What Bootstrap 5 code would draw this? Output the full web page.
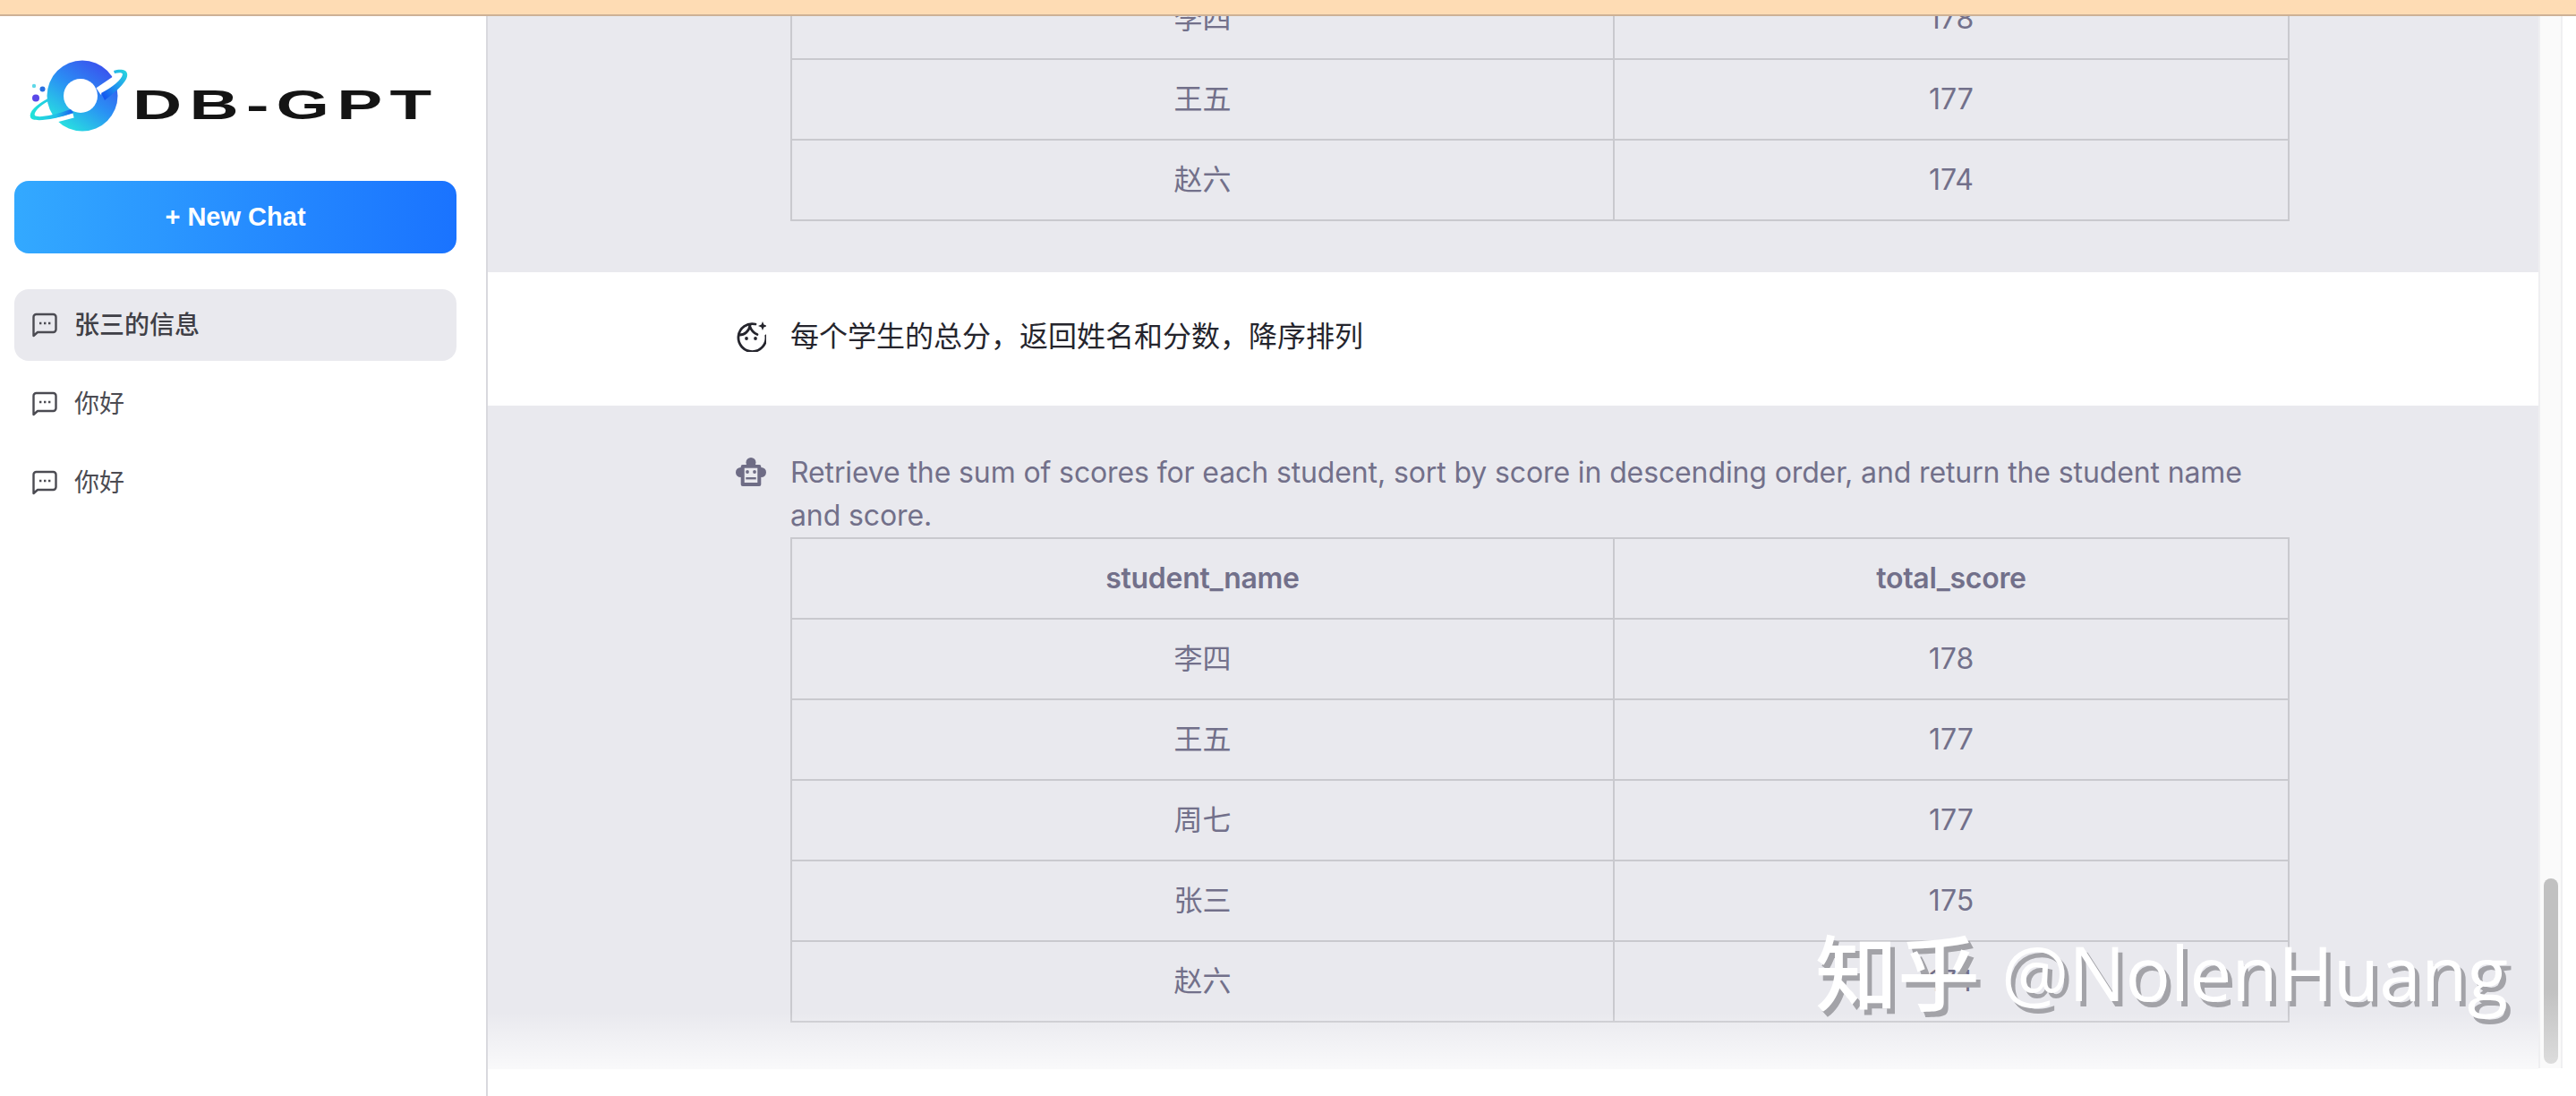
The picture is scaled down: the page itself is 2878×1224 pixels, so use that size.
<!DOCTYPE html>
<html lang="zh">
<head>
    <meta charset="UTF-8" />
    <title>DB-GPT</title>
    <link href="https://cdn.jsdelivr.net/npm/bootstrap@5.3.0/dist/css/bootstrap.min.css" rel="stylesheet" />
    <style>
        html, body { height: 100%; overflow: hidden; }
        body { font-family: "Inter", "Noto Sans CJK SC", sans-serif; background: #fff; }
        .top-strip { height: 18px; background: #fedcb4; border-bottom: 2px solid #cdb196; flex: none; }
        .app-row { height: 1206px; }

        .side-panel { width: 545px; flex: none; border-right: 2px solid #d9d9de; padding: 0 33px 0 16px; }
        .logo-row { height: 184px; padding: 42px 0 0 14px; }
        .logo-word { font-family: "Liberation Sans", sans-serif; font-weight: 700; font-size: 46px; line-height: 1; color: #141414;
            letter-spacing: 5px; transform: scaleX(1.66); transform-origin: left center; margin-top: 34px; white-space: nowrap; }
        .new-chat { height: 81px; font-size: 29px; font-weight: 600; color: #fff; border: 0; border-radius: 16px;
            background: linear-gradient(90deg, #33a9ff, #1a73ff); font-family: "Liberation Sans", sans-serif; }
        .new-chat:hover { color: #fff; }
        .chat-list { margin-top: 40px; gap: 8px; }
        .chat-item { height: 80px; font-size: 28px; color: #4b4b52; border: 0; border-radius: 16px !important; padding: 0 19px;
            display: flex; align-items: center; gap: 18px; margin: 0; }
        .chat-item.current { background: #e9e9ee; font-weight: 500; color: #3f3f46; }
        .chat-item svg { width: 30px; height: 30px; flex: none; }

        .chat-scroll { height: 1206px; padding-bottom: 30px; width: 2291px; flex: none; }
        .msg-block { flex: none; padding-left: 277px; display: flex; gap: 27px; font-size: 32px; line-height: 48px; letter-spacing: -.12px; }
        .msg-block svg { width: 34px; height: 34px; flex: none; }
        .msg-bot { background: #e9e9ee; color: #72708a; }
        .msg-bot svg { margin-top: 7px; }
        .msg-user { background: #fff; color: #25252d; padding-top: 48px; padding-bottom: 53px; letter-spacing: 0; }
        .msg-user svg { margin-top: 7px; }
        .msg-first { padding-bottom: 57px; }
        .msg-last { padding-top: 51px; padding-bottom: 52px; }
        .msg-col { width: 1675px; flex: none; }
        .icon-gap { width: 34px; flex: none; }

        .score-table { margin: 0; width: 1675px; table-layout: fixed; --bs-table-bg: transparent; --bs-table-color: #72708a;
            border-color: #c9c9ce; border-width: 2px; border-collapse: collapse; }
        .score-table th, .score-table td { height: 90px; padding: 0; text-align: center; vertical-align: middle; border: 2px solid #c9c9ce;
            font-size: 32px; color: #72708a; background: transparent; box-shadow: none; letter-spacing: 0; }
        .score-table th { font-weight: 600; letter-spacing: -.3px; }
        .name-col { width: 919px; }

        .fade-foot { position: absolute; left: 0; right: 0; bottom: 0; height: 94px;
            background: linear-gradient(to bottom, rgba(255,255,255,0), rgba(255,255,255,.72) 66%, rgba(255,255,255,.9)); pointer-events: none; }
        .scroll-track { width: 27px; height: 1175px; flex: none; background: #fafafa; border-left: 2px solid #efeff1; border-right: 2px solid #efeff1; }
        .scroll-thumb { width: 16px; height: 207px; margin: 963px auto 0; border-radius: 8px; background: linear-gradient(to bottom, #c1c1c1 60%, #dcdcdc); }

        .zhihu-mark { position: absolute; left: 2028px; top: 1027px; font-family: "Open Sans", "Noto Sans CJK SC", sans-serif; font-size: 92px; font-weight: 500; line-height: 1.3;
            color: #fff; white-space: nowrap; text-shadow: 5px 6px 0 #a3a3a8; }
        .zhihu-name { font-size: 84px; font-weight: 400; vertical-align: 4px; }
    </style>
</head>
<body class="d-flex flex-column">

<div class="top-strip"></div>

<div class="app-row d-flex">
    <aside class="side-panel d-flex flex-column">
        <div class="logo-row d-flex align-items-start">
            <svg width="118" height="95" viewBox="0 0 118 95" class="flex-shrink-0">
                <defs>
                    <linearGradient id="planet" x1="0.85" y1="0.1" x2="0.25" y2="0.95">
                        <stop offset="0" stop-color="#3a52ee" />
                        <stop offset=".5" stop-color="#2a90f4" />
                        <stop offset="1" stop-color="#28e0e0" />
                    </linearGradient>
                    <linearGradient id="ringLeft" x1="0" y1="0" x2="1" y2="0">
                        <stop offset="0" stop-color="#22e4d8" />
                        <stop offset=".6" stop-color="#20c0e8" />
                        <stop offset="1" stop-color="#1a5cf0" />
                    </linearGradient>
                    <linearGradient id="ringRight" x1="0" y1="1" x2="1" y2="0">
                        <stop offset="0" stop-color="#0f45f0" />
                        <stop offset=".5" stop-color="#2196ee" />
                        <stop offset="1" stop-color="#28dcdc" />
                    </linearGradient>
                </defs>
                <circle cx="62" cy="47" r="39.5" fill="url(#planet)" />
                <path d="M80 42L108 23" stroke="#fff" stroke-width="9" />
                <path d="M6 81L52 69" stroke="#fff" stroke-width="5" />
                <circle cx="60" cy="47" r="19" fill="#fff" />
                <path d="M23.5 50C10 57 2 65 4 71C6 77 30 74 52 66L49 62C30 69 12 72 9 69C7 66 14 58 24 53Z" fill="url(#ringLeft)" />
                <path d="M83 44L87 52C100 42 114 30 112 22C111 17 103 17 97 19L98 22C103 21 107 21 107 23C106 29 95 38 83 44Z" fill="url(#ringRight)" />
                <circle cx="8" cy="36" r="2.2" fill="#5fd8e8" />
                <circle cx="17.5" cy="39.5" r="3" fill="#2a6fe0" />
                <circle cx="10" cy="49.5" r="4" fill="#5a48e8" />
            </svg>
            <span class="logo-word">DB-GPT</span>
        </div>

        <button type="button" class="btn new-chat w-100">+ New Chat</button>

        <div class="list-group chat-list">
            <a href="#" class="list-group-item chat-item current">
                <svg viewBox="0 0 30 30" fill="none" stroke="#4b4b52" stroke-width="2.4"><path d="M2.5 27V6a3 3 0 0 1 3-3h19a3 3 0 0 1 3 3v14a3 3 0 0 1-3 3H7Z" stroke-linejoin="round" /><path d="M9 13h2.4M14 13h2.4M19 13h2.4" stroke-width="2.6" /></svg>
                张三的信息
            </a>
            <a href="#" class="list-group-item chat-item">
                <svg viewBox="0 0 30 30" fill="none" stroke="#4b4b52" stroke-width="2.4"><path d="M2.5 27V6a3 3 0 0 1 3-3h19a3 3 0 0 1 3 3v14a3 3 0 0 1-3 3H7Z" stroke-linejoin="round" /><path d="M9 13h2.4M14 13h2.4M19 13h2.4" stroke-width="2.6" /></svg>
                你好
            </a>
            <a href="#" class="list-group-item chat-item">
                <svg viewBox="0 0 30 30" fill="none" stroke="#4b4b52" stroke-width="2.4"><path d="M2.5 27V6a3 3 0 0 1 3-3h19a3 3 0 0 1 3 3v14a3 3 0 0 1-3 3H7Z" stroke-linejoin="round" /><path d="M9 13h2.4M14 13h2.4M19 13h2.4" stroke-width="2.6" /></svg>
                你好
            </a>
        </div>
    </aside>

    <main class="chat-scroll position-relative overflow-hidden d-flex flex-column justify-content-end">
        <section class="msg-block msg-bot msg-first">
            <span class="icon-gap"></span>
            <div class="msg-col">
                <table class="table score-table">
                    <colgroup><col class="name-col" /><col /></colgroup>
                    <tbody>
                        <tr><td>李四</td><td>178</td></tr>
                        <tr><td>王五</td><td>177</td></tr>
                        <tr><td>赵六</td><td>174</td></tr>
                    </tbody>
                </table>
            </div>
        </section>

        <section class="msg-block msg-user">
            <svg viewBox="0 0 34 34" fill="none" stroke="#25252d" stroke-width="2.8" stroke-linecap="round">
                <path d="M22 3A15.5 15.5 0 1 0 33.8 16" />
                <path d="M4 15C10 15 15 11 16 4M15.5 5C17 9 20 13 24 14.5" />
                <circle cx="12" cy="19" r="1.9" fill="#25252d" stroke="none" />
                <circle cx="22" cy="19" r="1.9" fill="#25252d" stroke="none" />
                <path d="M30 0l1.4 3.6L35 5l-3.6 1.4L30 10l-1.4-3.6L25 5l3.6-1.4Z" fill="#25252d" stroke="none" />
            </svg>
            <div class="msg-col">每个学生的总分，返回姓名和分数，降序排列</div>
        </section>

        <section class="msg-block msg-bot msg-last">
            <svg viewBox="0 0 34 34" fill="#6e6c85">
                <circle cx="17" cy="5.5" r="5.5" />
                <circle cx="5.5" cy="16.5" r="5.5" />
                <circle cx="28.5" cy="16.5" r="5.5" />
                <rect x="5.7" y="8" width="22.6" height="24" rx="2" />
                <rect x="9.7" y="11.7" width="14.6" height="16.3" fill="#e9e9ee" />
                <circle cx="13" cy="16" r="1.9" />
                <circle cx="21" cy="16" r="1.9" />
                <rect x="11.3" y="22" width="11.4" height="2.4" />
            </svg>
            <div class="msg-col">
                Retrieve the sum of scores for each student, sort by score in descending order, and return the student name and score.
                <table class="table score-table">
                    <colgroup><col class="name-col" /><col /></colgroup>
                    <thead>
                        <tr><th>student_name</th><th>total_score</th></tr>
                    </thead>
                    <tbody>
                        <tr><td>李四</td><td>178</td></tr>
                        <tr><td>王五</td><td>177</td></tr>
                        <tr><td>周七</td><td>177</td></tr>
                        <tr><td>张三</td><td>175</td></tr>
                        <tr><td>赵六</td><td>174</td></tr>
                    </tbody>
                </table>
            </div>
        </section>

        <div class="fade-foot"></div>
    </main>

    <div class="scroll-track"><div class="scroll-thumb"></div></div>
</div>

<div class="zhihu-mark">知乎 <span class="zhihu-name">@NolenHuang</span></div>

<script src="https://cdn.jsdelivr.net/npm/bootstrap@5.3.0/dist/js/bootstrap.bundle.min.js"></script>
</body>
</html>
